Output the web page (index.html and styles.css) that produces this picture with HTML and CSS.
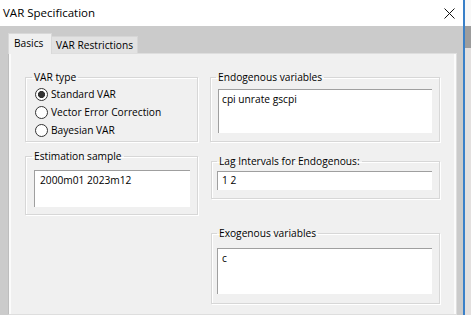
FILE: index.html
```html
<!DOCTYPE html>
<html>
<head>
    <meta charset="utf-8">
    <title>VAR Specification</title>
    <link rel="stylesheet" href="styles.css">
</head>
<body>
<div class="screen">
    <div class="dialog">
        <div class="titlebar">
            <span class="title">VAR Specification</span>
            <svg class="close" width="11" height="11" viewBox="0 0 11 11">
                <path d="M0.5 0.5L10.5 10.5M10.5 0.5L0.5 10.5" stroke="#111" stroke-width="1" fill="none"/>
            </svg>
        </div>
        <div class="client">
            <div class="tabs">
                <div class="tab active">Basics</div>
                <div class="tab">VAR Restrictions</div>
            </div>
            <div class="page">
                <div class="col">
                    <fieldset class="group vartype">
                        <legend>VAR type</legend>
                        <div class="radio-row"><span class="radio checked"></span>Standard VAR</div>
                        <div class="radio-row"><span class="radio"></span>Vector Error Correction</div>
                        <div class="radio-row"><span class="radio"></span>Bayesian VAR</div>
                    </fieldset>
                    <fieldset class="group sample">
                        <legend>Estimation sample</legend>
                        <div class="field sample-field">2000m01 2023m12</div>
                    </fieldset>
                </div>
                <div class="col">
                    <fieldset class="group endo">
                        <legend>Endogenous variables</legend>
                        <div class="field endo-field">cpi unrate gscpi</div>
                    </fieldset>
                    <fieldset class="group lag">
                        <legend>Lag Intervals for Endogenous:</legend>
                        <div class="field lag-field">1 2</div>
                    </fieldset>
                    <fieldset class="group exo">
                        <legend>Exogenous variables</legend>
                        <div class="field exo-field">c</div>
                    </fieldset>
                </div>
            </div>
        </div>
    </div>
    <div class="desk"></div>
</div>
</body>
</html>
```

FILE: styles.css
```css
html, body {
    margin: 0;
    padding: 0;
}

body {
    font-family: "Open Sans", "Noto Sans", sans-serif;
    font-size: 10.2px;
    color: #000;
    background: #cbcbcb;
}

.screen {
    display: flex;
    width: 471px;
    height: 315px;
    overflow: hidden;
}

.dialog {
    width: 463px;
    display: flex;
    flex-direction: column;
    border-right: 2px solid #3a80c8;
}

.desk {
    flex: 1;
    background: linear-gradient(#f8f8f8 0 26px, #9d9d9d 26px 48px, #e3e0df 48px);
}

.titlebar {
    height: 26px;
    background: #fff;
    display: flex;
    align-items: center;
    justify-content: space-between;
    padding: 0 8px 0 3px;
}

.title {
    font-size: 11.5px;
    line-height: 14px;
}

.close {
    margin-top: 1px;
}

.client {
    flex: 1;
    display: flex;
    flex-direction: column;
    background: #cbcbcb;
    padding: 0 6px 0 8px;
}

.tabs {
    height: 27px;
    display: flex;
    align-items: flex-end;
}

.tab {
    box-sizing: border-box;
    height: 17px;
    width: 86px;
    padding-left: 4px;
    line-height: 16px;
    background: #e2e2e2;
    border: 1px solid #d6d6d6;
    border-left: 0;
    border-bottom: 0;
}

.tab.active {
    position: relative;
    z-index: 1;
    width: 44px;
    height: 21px;
    margin-bottom: -1px;
    padding-left: 5px;
    line-height: 19px;
    background: #f0f0f0;
    border: 1px solid #d9d9d9;
    border-bottom: 0;
}

.page {
    flex: 1;
    background: #f0f0f0;
    border: 1px solid #dedede;
    border-left-color: #bdbdbd;
    box-shadow: inset 2px 0 #fbfbfb, inset -2px 0 #fbfbfb;
    display: grid;
    grid-template-columns: 173px 230px;
    column-gap: 12px;
    align-content: start;
    padding: 16px 0 0 16px;
}

.group {
    margin: 0;
    min-width: 0;
    border: 1px solid #d7d7d7;
    box-shadow: inset 1px 1px #fff, 1px 1px #fff;
    padding: 0 7px 7px 8px;
}

.group legend {
    padding: 0 2px;
    margin-left: -2px;
    line-height: 14px;
}

.vartype {
    padding: 1px 7px 2px 8px;
}

.radio-row {
    height: 18px;
    display: flex;
    align-items: center;
    gap: 3px;
    margin-left: 1px;
}

.radio {
    box-sizing: border-box;
    width: 13px;
    height: 13px;
    border: 1px solid #333;
    border-radius: 50%;
    background: #fff;
}

.radio.checked {
    background: radial-gradient(circle, #333 0 3.3px, #fff 3.8px);
}

.sample {
    margin-top: 7px;
    padding: 7px 7px 7px 8px;
}

.field {
    box-sizing: border-box;
    background: #fff;
    border-top: 1px solid #9f9f9f;
    border-left: 1px solid #9f9f9f;
    padding: 2px 4px 0 3px;
    line-height: 14px;
}

.sample-field {
    height: 37px;
    padding-left: 5px;
}

.endo {
    padding: 5px 7px 8px 7px;
}

.endo-field {
    height: 44px;
}

.lag {
    margin: 12px 0 0 1px;
    padding: 3px 7px 8px 5px;
}

.lag legend,
.exo legend {
    margin-left: 0;
}

.lag-field {
    height: 19px;
    padding: 1px 4px 0 4px;
}

.exo {
    margin: 27px 0 0 1px;
    padding: 8px 7px 9px 5px;
}

.exo-field {
    height: 46px;
    padding-left: 4px;
}
```
